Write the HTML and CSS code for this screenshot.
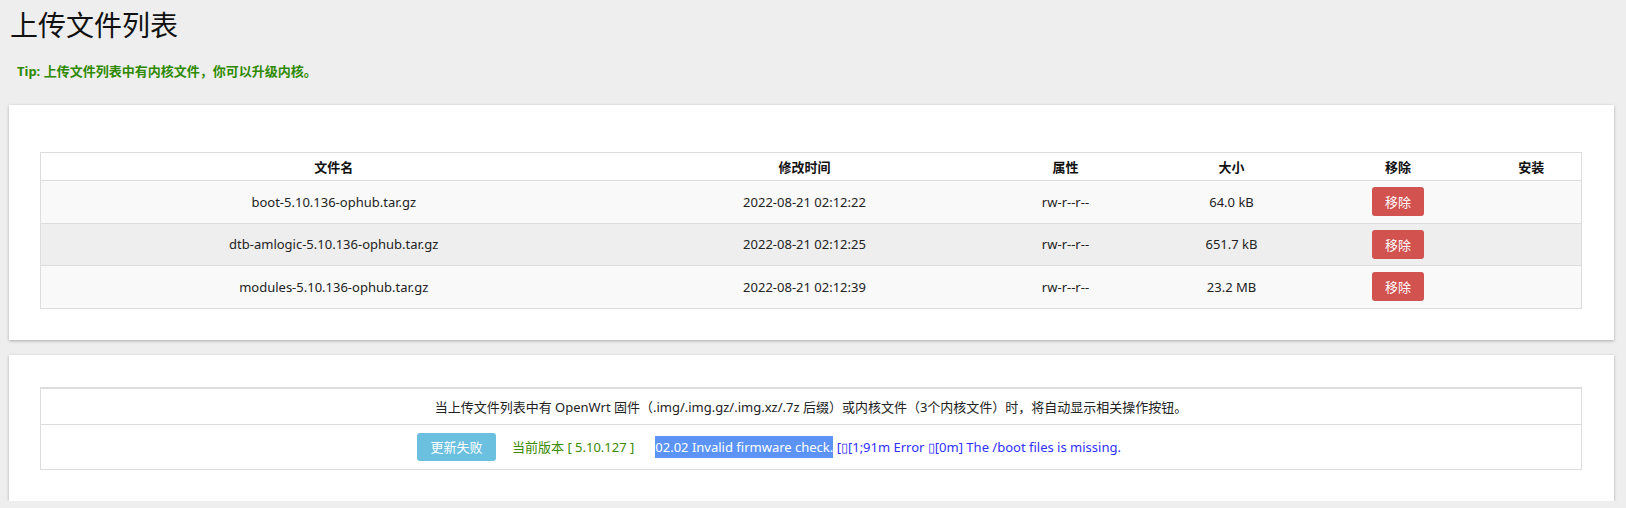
FILE: index.html
```html
<!DOCTYPE html>
<html lang="zh-CN">
<head>
<meta charset="utf-8">
<title>上传文件列表</title>
<link rel="stylesheet" href="styles.css">
</head>
<body>
<h2 class="title">上传文件列表</h2>
<div class="tip">Tip: 上传文件列表中有内核文件，你可以升级内核。</div>

<div class="card card-files">
  <table class="tbl files">
    <colgroup>
      <col class="c1"><col class="c2"><col class="c3"><col class="c4"><col class="c5"><col class="c6">
    </colgroup>
    <thead>
      <tr><th>文件名</th><th>修改时间</th><th>属性</th><th>大小</th><th>移除</th><th>安装</th></tr>
    </thead>
    <tbody>
      <tr class="odd"><td>boot-5.10.136-ophub.tar.gz</td><td>2022-08-21 02:12:22</td><td>rw-r--r--</td><td>64.0 kB</td><td><button class="btn btn-remove">移除</button></td><td></td></tr>
      <tr class="even"><td>dtb-amlogic-5.10.136-ophub.tar.gz</td><td>2022-08-21 02:12:25</td><td>rw-r--r--</td><td>651.7 kB</td><td><button class="btn btn-remove">移除</button></td><td></td></tr>
      <tr class="odd"><td>modules-5.10.136-ophub.tar.gz</td><td>2022-08-21 02:12:39</td><td>rw-r--r--</td><td>23.2 MB</td><td><button class="btn btn-remove">移除</button></td><td></td></tr>
    </tbody>
  </table>
</div>

<div class="card card-actions">
  <table class="tbl actions">
    <tr class="info-row"><td>当上传文件列表中有 OpenWrt 固件（.img/.img.gz/.img.xz/.7z 后缀）或内核文件（3个内核文件）时，将自动显示相关操作按钮。</td></tr>
    <tr class="action-row"><td>
      <div class="action-line">
        <button class="btn btn-info">更新失败</button>
        <span class="version">当前版本 [ 5.10.127 ]</span>
        <span class="msg"><span class="sel">02.02 Invalid firmware check.</span> [▯[1;91m Error ▯[0m] The /boot files is missing.</span>
      </div>
    </td></tr>
  </table>
</div>
</body>
</html>
```

FILE: styles.css
```css
html, body {
  margin: 0;
  padding: 0;
}
body {
  background: #eeeeee;
  font-family: "Noto Sans", "Noto Sans CJK SC", sans-serif;
  font-size: 13px;
  color: #222;
  padding: 0 12px 0 9px;
}
.title {
  margin: 8px 0 0 1px;
  font-size: 28px;
  line-height: 34px;
  font-weight: normal;
  color: #111;
}
.tip {
  margin: 19px 0 0 8px;
  font-size: 13px;
  line-height: 20px;
  font-weight: bold;
  color: #2e8a00;
}
.card {
  background: #fff;
  box-shadow: 0 1px 3px rgba(0, 0, 0, 0.28);
  padding: 32px 32px 31px 31px;
}
.card-files {
  margin-top: 24px;
  padding-top: 47px;
}
.card-actions {
  margin-top: 15px;
}
.tbl {
  width: 100%;
  border-collapse: collapse;
  border: 1px solid #dddddd;
  table-layout: fixed;
}
.tbl td, .tbl th {
  text-align: center;
  padding: 0 6px;
  border-top: 1px solid #dddddd;
}
.files col.c1 { width: 586px; }
.files col.c2 { width: 356px; }
.files col.c3 { width: 166px; }
.files col.c4 { width: 166px; }
.files col.c5 { width: 167px; }
.files col.c6 { width: 100px; }
.files th {
  height: 27px;
  font-weight: bold;
  color: #111;
  background: #fff;
}
.files td {
  height: 41.5px;
}
.files tr.odd td { background: #f9f9f9; }
.files tr.even td { background: #eeeeee; }
.btn {
  font-family: inherit;
  font-size: 13px;
  color: #fff;
  border: none;
  border-radius: 3px;
  cursor: pointer;
}
.btn-remove {
  width: 52px;
  height: 29px;
  background: #d2524f;
  padding: 0;
}
.actions {
  border-top: 2px solid #dddddd;
}
.info-row td {
  height: 35px;
  border-top: none;
}
.action-row td {
  height: 44px;
  text-align: left;
  padding: 0 0 0 376px;
}
.action-line {
  display: flex;
  align-items: center;
}
.btn-info {
  width: 79px;
  height: 28px;
  background: #6bc0df;
  padding: 0;
  margin-right: 16px;
}
.version {
  color: #3b8a00;
  margin-right: 21px;
  white-space: pre;
}
.msg {
  color: #3030ff;
  white-space: pre;
}
.sel {
  background: #5b94f6;
  color: #fff;
  padding: 2px 0;
}
```
